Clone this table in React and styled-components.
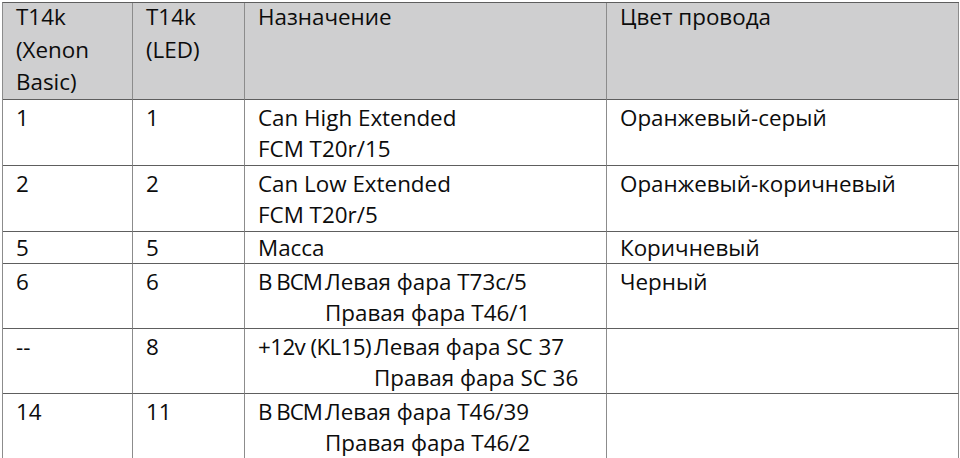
import React from 'react';
import styled, { createGlobalStyle } from 'styled-components';

const GlobalStyle = createGlobalStyle`
  html, body {
    margin: 0;
    padding: 0;
    background: #ffffff;
  }
  body {
    font-family: 'Open Sans', 'Noto Sans', sans-serif;
    color: #0c0c0c;
  }
`;

const Page = styled.div`
  width: 960px;
  height: 458px;
  padding: 2px 0 0 2px;
  box-sizing: border-box;
  overflow: hidden;
`;

const Table = styled.table`
  width: 956px;
  table-layout: fixed;
  border-collapse: separate;
  border-spacing: 0;
  border-top: 1px solid #5e5e5e;
  border-left: 1px solid #8c8c8c;
  font-size: 22.4px;
  line-height: 31px;
`;

const HeadRow = styled.tr`
  background: #cfcfd0;
  height: 95px;
`;

const Row = styled.tr`
  height: ${(props) => props.h}px;
`;

const HeadCell = styled.th`
  text-align: left;
  vertical-align: top;
  font-weight: 400;
  line-height: 32.5px;
  padding: 0 8px 0 13px;
  border-right: 1px solid #8c8c8c;
  border-bottom: 1px solid #5e5e5e;
`;

const Cell = styled.td`
  vertical-align: top;
  padding: ${(props) => (props.compact ? '0' : '2px')} 8px 0 13px;
  border-right: 1px solid #8c8c8c;
  border-bottom: 1px solid #5e5e5e;
`;

const Line = styled.div`
  white-space: nowrap;
`;

const HeadLines = styled.div`
  margin-top: -2px;
`;

const Split = styled.div`
  display: grid;
  grid-template-columns: auto auto;
  justify-content: start;
  column-gap: 3px;
  white-space: nowrap;
`;

const Prefix = styled.span`
  letter-spacing: ${(props) => props.tight}px;
`;

const columns = [130, 112, 362, 352];

const headers = [
  ['T14k', '(Xenon', 'Basic)'],
  ['T14k', '(LED)'],
  ['Назначение'],
  ['Цвет провода'],
];

const rows = [
  { a: '1', b: '1', h: 66, purpose: ['Can High Extended', 'FCM T20r/15'], color: 'Оранжевый-серый' },
  { a: '2', b: '2', h: 66, purpose: ['Can Low Extended', 'FCM T20r/5'], color: 'Оранжевый-коричневый' },
  { a: '5', b: '5', h: 32, purpose: ['Масса'], color: 'Коричневый', compact: true },
  { a: '6', b: '6', h: 65, prefix: 'В ВСМ', tight: -1, left: 'Левая фара T73c/5', right: 'Правая фара T46/1', color: 'Черный' },
  { a: '--', b: '8', h: 65, prefix: '+12v (KL15)', tight: -0.6, left: 'Левая фара SC 37', right: 'Правая фара SC 36', color: '' },
  { a: '14', b: '11', h: 64, prefix: 'В ВСМ', tight: -1, left: 'Левая фара T46/39', right: 'Правая фара T46/2', color: '' },
];

function Purpose({ row }) {
  if (row.prefix) {
    return (
      <Split>
        <Prefix tight={row.tight}>{row.prefix}</Prefix>
        <span>{row.left}</span>
        <span />
        <span>{row.right}</span>
      </Split>
    );
  }
  return row.purpose.map((text) => <Line key={text}>{text}</Line>);
}

export default function App() {
  return (
    <Page>
      <GlobalStyle />
      <Table>
        <colgroup>
          {columns.map((w, i) => (
            <col key={i} style={{ width: w }} />
          ))}
        </colgroup>
        <thead>
          <HeadRow>
            {headers.map((lines, i) => (
              <HeadCell key={i}>
                <HeadLines>
                  {lines.map((text) => (
                    <Line key={text}>{text}</Line>
                  ))}
                </HeadLines>
              </HeadCell>
            ))}
          </HeadRow>
        </thead>
        <tbody>
          {rows.map((row, i) => (
            <Row key={i} h={row.h}>
              <Cell compact={row.compact}>{row.a}</Cell>
              <Cell compact={row.compact}>{row.b}</Cell>
              <Cell compact={row.compact}>
                <Purpose row={row} />
              </Cell>
              <Cell compact={row.compact}>{row.color}</Cell>
            </Row>
          ))}
        </tbody>
      </Table>
    </Page>
  );
}
